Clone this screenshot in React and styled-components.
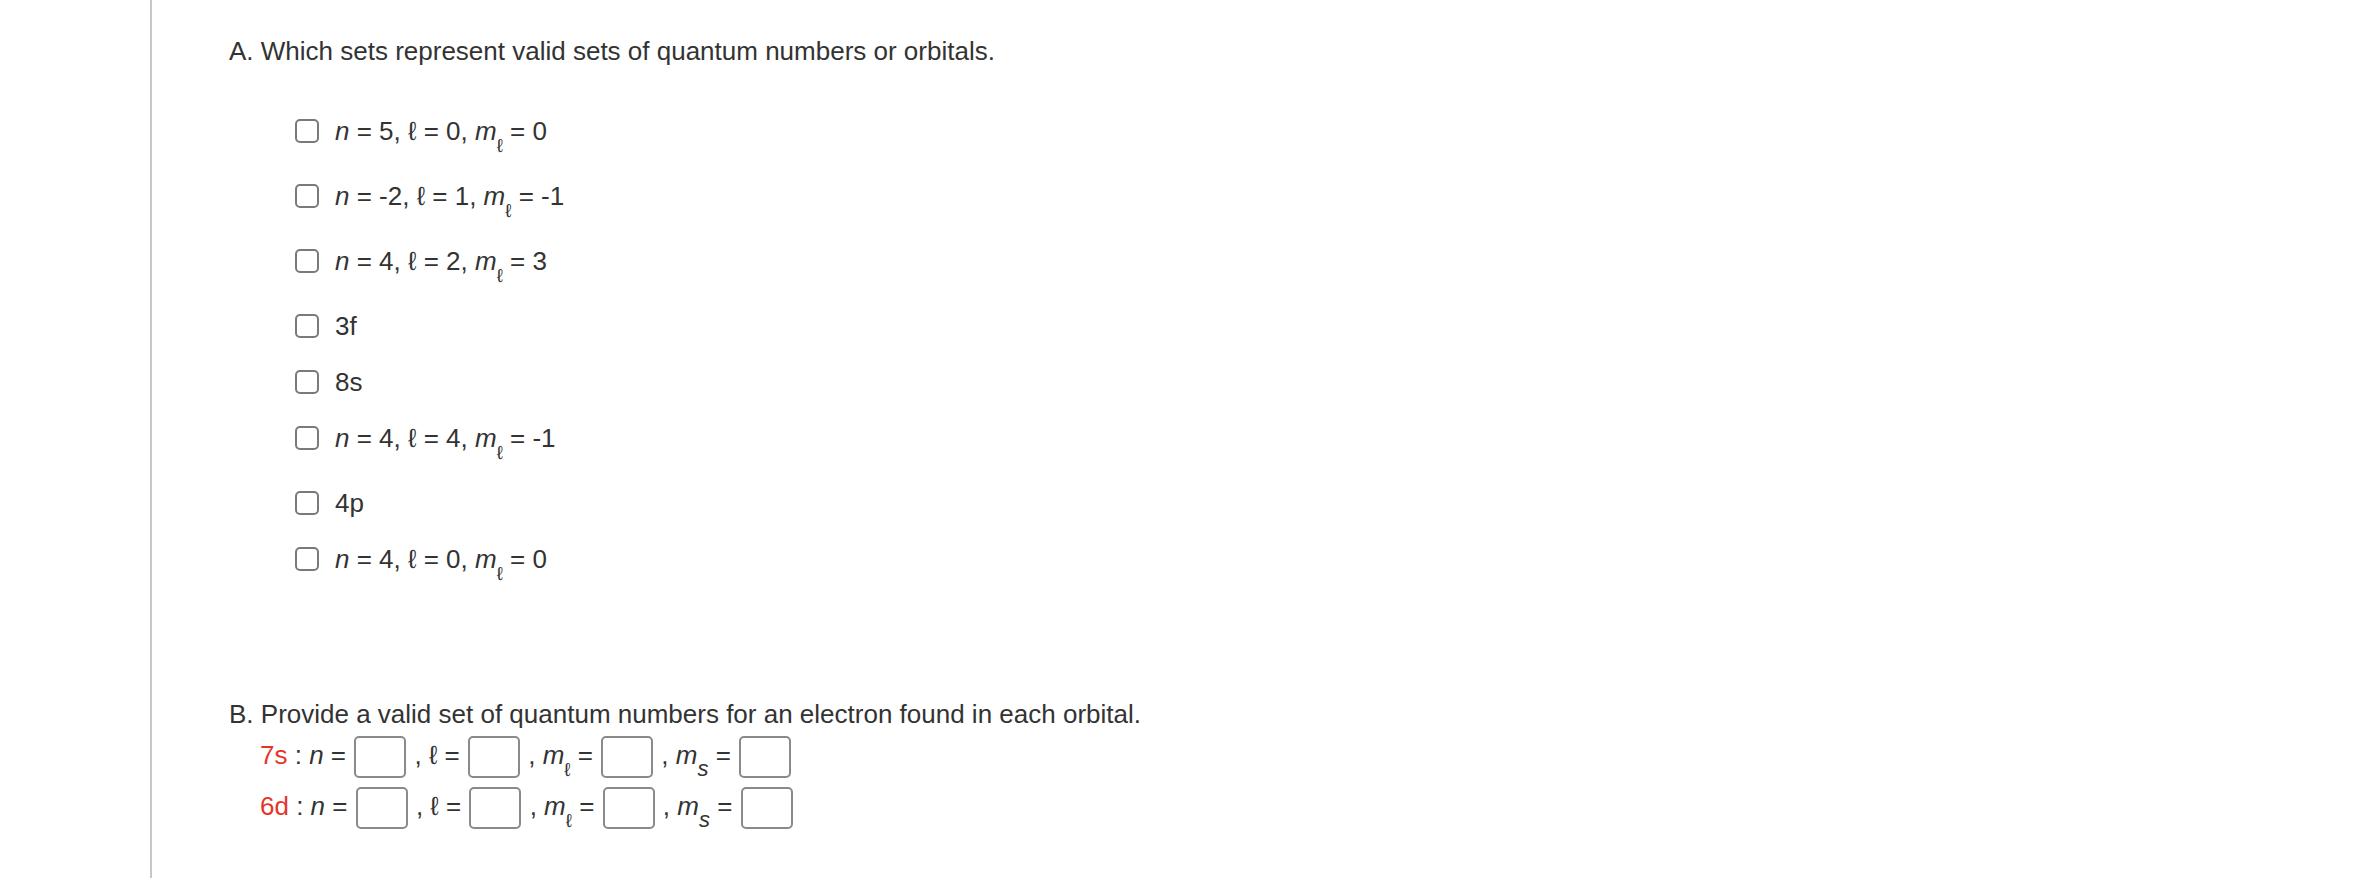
import React from "react";
import styled, { createGlobalStyle } from "styled-components";

const GlobalStyle = createGlobalStyle`
  html, body {
    margin: 0;
    padding: 0;
    background: #ffffff;
  }
  body {
    font-family: "Liberation Sans", Arial, sans-serif;
    color: #333333;
  }
`;

const Page = styled.div`
  display: flex;
  min-height: 878px;
  background: #ffffff;
`;

const Gutter = styled.div`
  width: 150px;
  flex: none;
`;

const Main = styled.main`
  flex: 1;
  border-left: 2px solid #c8c8c8;
  padding: 36px 0 0 77px;
  min-height: 842px;
`;

const Heading = styled.div`
  font-size: 26px;
  line-height: 30px;
  color: #333333;
  margin: ${(p) => p.$margin || "0"};
`;

const OptionList = styled.div`
  display: flex;
  flex-direction: column;
  gap: 26px;
  margin: 50px 0 0 66px;
`;

const Option = styled.label`
  display: flex;
  align-items: flex-start;
  gap: 16px;
  cursor: pointer;
`;

const Box = styled.span`
  flex: none;
  width: 24px;
  height: 24px;
  box-sizing: border-box;
  margin-top: 3px;
  border: 2px solid #7a7a7a;
  border-radius: 5px;
  background: #ffffff;
`;

const Label = styled.span`
  font-size: 26px;
  line-height: 30px;
  color: #333333;
  white-space: pre;
`;

const Var = styled.i`
  font-style: italic;
`;

const Sub = styled.span`
  font-size: ${(p) => (p.$big ? "22px" : "19px")};
  line-height: 1;
  vertical-align: -12px;
  font-style: ${(p) => (p.$italic ? "italic" : "normal")};
`;

const FillList = styled.div`
  display: flex;
  flex-direction: column;
  gap: 7px;
  margin-left: 31px;
`;

const FillRow = styled.div`
  font-size: 26px;
  line-height: 30px;
  color: #333333;
  white-space: pre;
`;

const Orbital = styled.span`
  color: #e4352b;
`;

const Blank = styled.span`
  display: inline-block;
  vertical-align: middle;
  width: 52px;
  height: 42px;
  margin: 0 1px;
  box-sizing: border-box;
  border: 2px solid #8a8a8a;
  border-radius: 5px;
  background: #ffffff;
`;

const ell = "\u2113";

const Nlm = ({ n, l, m }) => (
  <>
    <Var>n</Var>
    {` = ${n}, ${ell} = ${l}, `}
    <Var>m</Var>
    <Sub>{ell}</Sub>
    {` = ${m}`}
  </>
);

const options = [
  { nlm: ["5", "0", "0"] },
  { nlm: ["-2", "1", "-1"] },
  { nlm: ["4", "2", "3"] },
  { text: "3f" },
  { text: "8s" },
  { nlm: ["4", "4", "-1"] },
  { text: "4p" },
  { nlm: ["4", "0", "0"] },
];

const FillLine = ({ orbital }) => (
  <FillRow>
    <Orbital>{orbital}</Orbital>
    {" : "}
    <Var>n</Var>
    {" = "}
    <Blank />
    {` , ${ell} = `}
    <Blank />
    {" , "}
    <Var>m</Var>
    <Sub>{ell}</Sub>
    {" = "}
    <Blank />
    {" , "}
    <Var>m</Var>
    <Sub $italic $big>s</Sub>
    {" = "}
    <Blank />
  </FillRow>
);

export default function App() {
  return (
    <>
      <GlobalStyle />
      <Page>
        <Gutter />
        <Main>
          <Heading>A. Which sets represent valid sets of quantum numbers or orbitals.</Heading>
          <OptionList>
            {options.map((o, i) => (
              <Option key={i}>
                <Box />
                <Label>{o.nlm ? <Nlm n={o.nlm[0]} l={o.nlm[1]} m={o.nlm[2]} /> : o.text}</Label>
              </Option>
            ))}
          </OptionList>
          <Heading $margin="116px 0 7px 0">
            B. Provide a valid set of quantum numbers for an electron found in each orbital.
          </Heading>
          <FillList>
            <FillLine orbital="7s" />
            <FillLine orbital="6d" />
          </FillList>
        </Main>
      </Page>
    </>
  );
}
